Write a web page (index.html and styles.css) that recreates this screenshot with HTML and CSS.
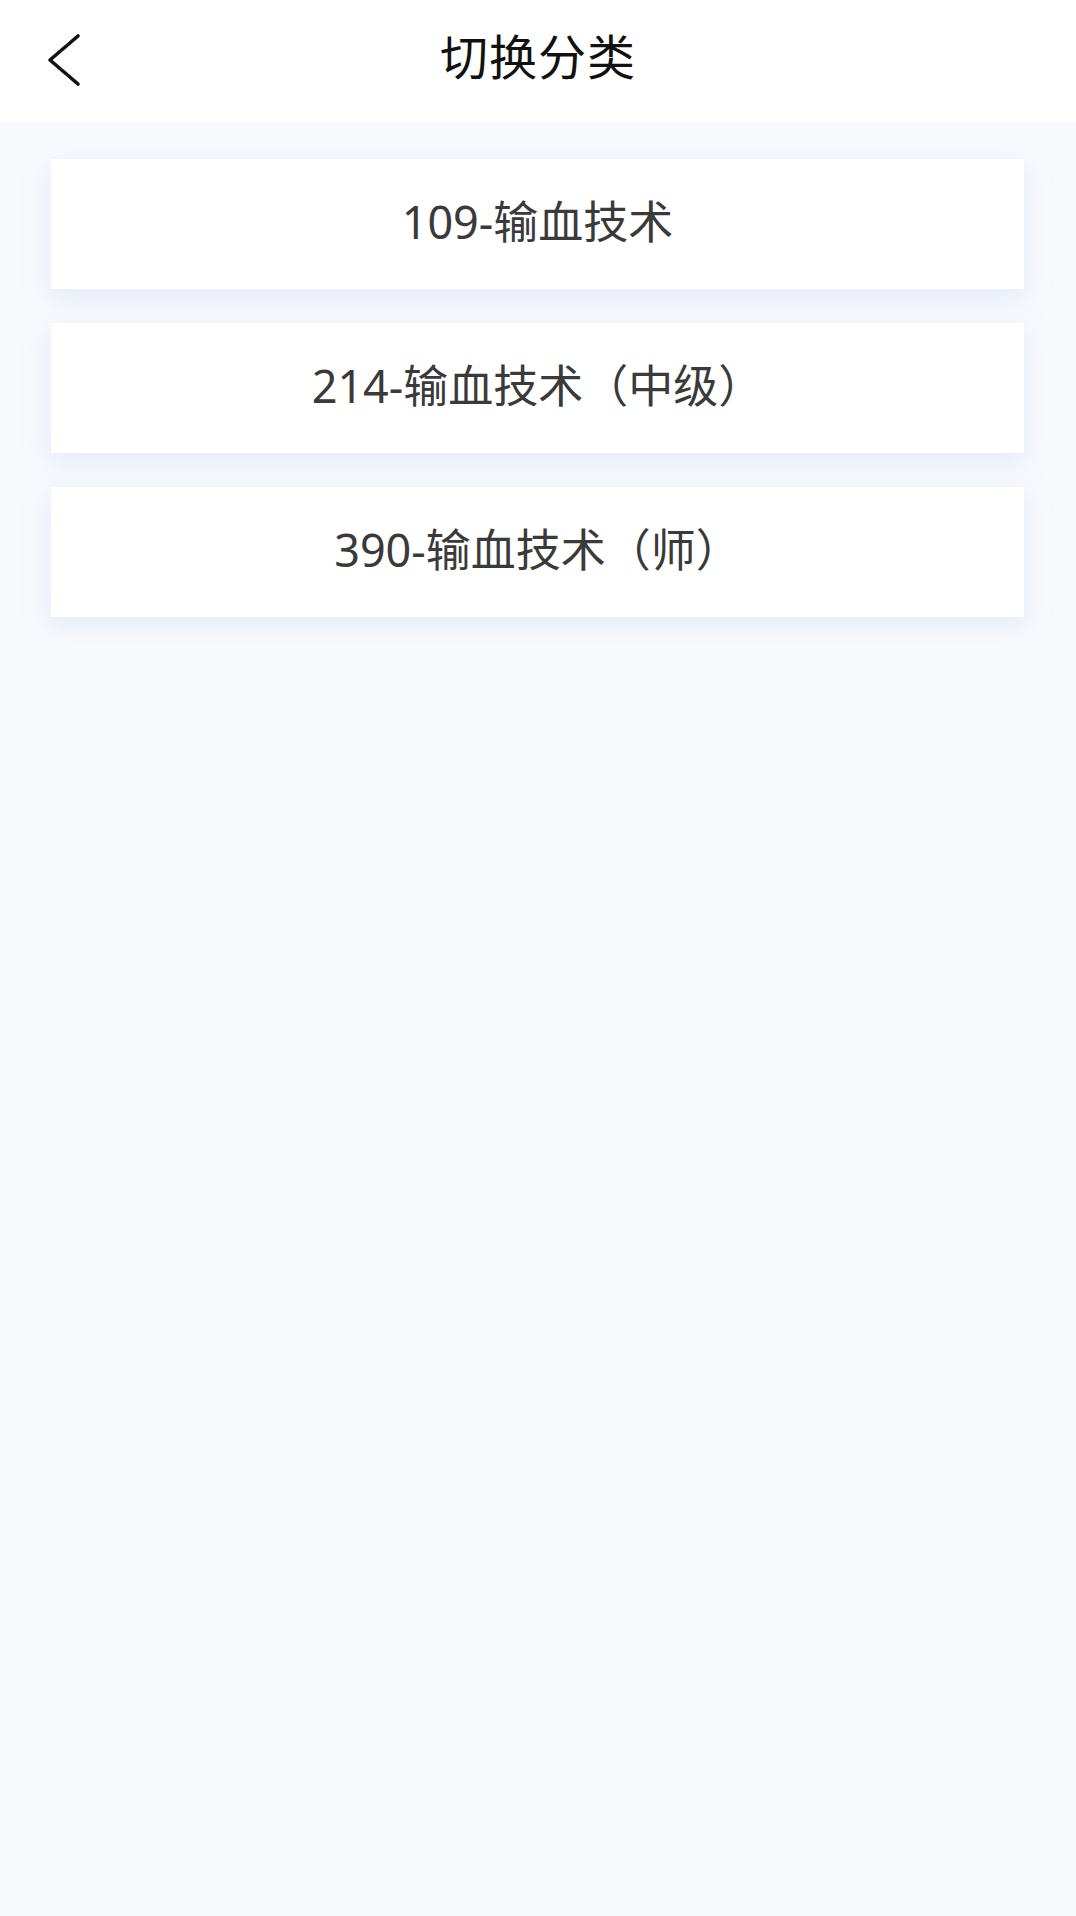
FILE: index.html
```html
<!DOCTYPE html>
<html lang="zh-CN">
<head>
  <meta charset="UTF-8">
  <title>切换分类</title>
  <link rel="stylesheet" href="styles.css">
</head>
<body>
  <header class="nav-bar">
    <a class="nav-back" href="#">
      <svg width="40" height="56" viewBox="0 0 40 56">
        <polyline points="34,4 6,28 34,52" fill="none" stroke="#111" stroke-width="3.6" stroke-linecap="round" stroke-linejoin="round"/>
      </svg>
    </a>
    <h1 class="nav-title">切换分类</h1>
  </header>

  <section class="category-list">
    <div class="category-item">109-输血技术</div>
    <div class="category-item">214-输血技术（中级）</div>
    <div class="category-item">390-输血技术（师）</div>
  </section>
</body>
</html>
```

FILE: styles.css
```css
/* Ogólne */
html, body {
  margin: 0;
  padding: 0;
}
body {
  font-family: "Noto Sans CJK SC", "Noto Sans", sans-serif;
  background-color: #f8f9fd;
  min-height: 1916px;
}
/* Pasek nawigacji */
.nav-bar {
  position: relative;
  height: 122px;
  background-color: #fff;
  display: flex;
  align-items: center;
  justify-content: center;
}
.nav-back {
  position: absolute;
  left: 44px;
  top: 32px;
  display: block;
  line-height: 0;
}
.nav-title {
  margin: 0;
  margin-top: -14px;
  font-size: 48px;
  font-weight: 400;
  color: #111;
  letter-spacing: 1px;
}
/* Lista kategorii */
.category-list {
  padding: 37px 52px 0 51px;
  display: flex;
  flex-direction: column;
  gap: 34px;
}
.category-item {
  height: 130px;
  background-color: #fff;
  box-shadow: 0 8px 24px rgba(190, 205, 235, 0.35);
  display: flex;
  align-items: center;
  justify-content: center;
  font-family: "Noto Sans", "Noto Sans CJK SC", sans-serif;
  font-size: 45px;
  color: #3a3a3a;
  padding-bottom: 10px;
  box-sizing: border-box;
}
```
